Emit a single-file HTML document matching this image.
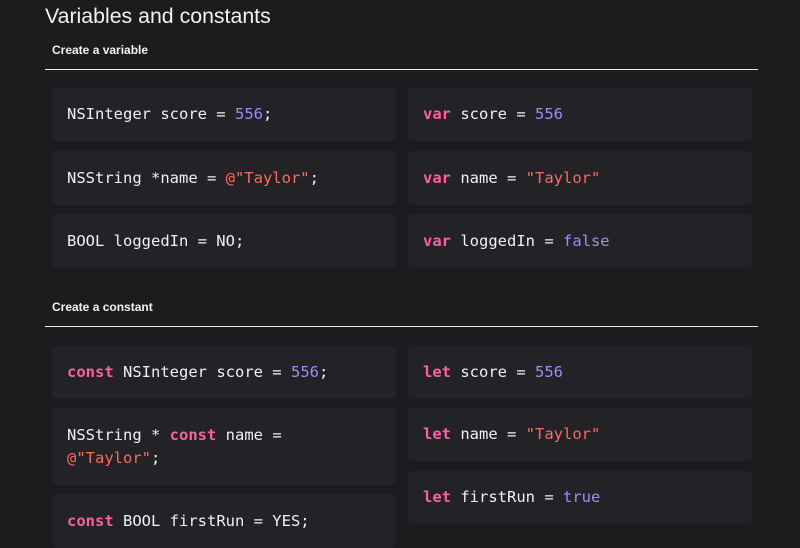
<!DOCTYPE html>
<html><head><style>
*{margin:0;padding:0;box-sizing:border-box}
body{width:800px;height:540px;background:#1c1c1f;color:#fff;font-family:"Liberation Sans",sans-serif;position:relative;overflow:hidden}
h1{position:absolute;left:45px;top:4px;font-size:21.3px;font-weight:normal;color:#f2f2f2}
h2{position:absolute;left:52px;font-size:12px;font-weight:bold;color:#f2f2f2}
.hr{position:absolute;left:45px;width:713px;height:1px;background:#e8e8e8}
.b{position:absolute;width:344px;background:#232327;border-radius:5px;font-family:"DejaVu Sans Mono","Liberation Mono",monospace;font-size:15.5px;color:#f0f0f0;padding:0 15px;display:flex;align-items:center;line-height:23px;white-space:pre}
.k{color:#fc5fa3;font-weight:bold}.n{color:#a08cf5}.s{color:#fc6a5d}
</style></head><body>
<h1>Variables and constants</h1>
<h2 style="top:43px">Create a variable</h2>
<div class="hr" style="top:69px"></div>
<div class="b" style="left:52px;top:88px;height:53px"><div>NSInteger score = <span class="n">556</span>;</div></div>
<div class="b" style="left:52px;top:151px;height:54px"><div>NSString *name = <span class="s">@"Taylor"</span>;</div></div>
<div class="b" style="left:52px;top:214px;height:54px"><div>BOOL loggedIn = NO;</div></div>
<div class="b" style="left:408px;top:88px;height:53px"><div><span class="k">var</span> score = <span class="n">556</span></div></div>
<div class="b" style="left:408px;top:151px;height:54px"><div><span class="k">var</span> name = <span class="s">"Taylor"</span></div></div>
<div class="b" style="left:408px;top:214px;height:54px"><div><span class="k">var</span> loggedIn = <span class="n">false</span></div></div>
<h2 style="top:300px">Create a constant</h2>
<div class="hr" style="top:326px"></div>
<div class="b" style="left:52px;top:346px;height:53px"><div><span class="k">const</span> NSInteger score = <span class="n">556</span>;</div></div>
<div class="b" style="left:52px;top:408px;height:77px"><div>NSString * <span class="k">const</span> name =
<span class="s">@"Taylor"</span>;</div></div>
<div class="b" style="left:52px;top:494px;height:54px"><div><span class="k">const</span> BOOL firstRun = YES;</div></div>
<div class="b" style="left:408px;top:346px;height:53px"><div><span class="k">let</span> score = <span class="n">556</span></div></div>
<div class="b" style="left:408px;top:408px;height:53px"><div><span class="k">let</span> name = <span class="s">"Taylor"</span></div></div>
<div class="b" style="left:408px;top:471px;height:53px"><div><span class="k">let</span> firstRun = <span class="n">true</span></div></div>
</body></html>
